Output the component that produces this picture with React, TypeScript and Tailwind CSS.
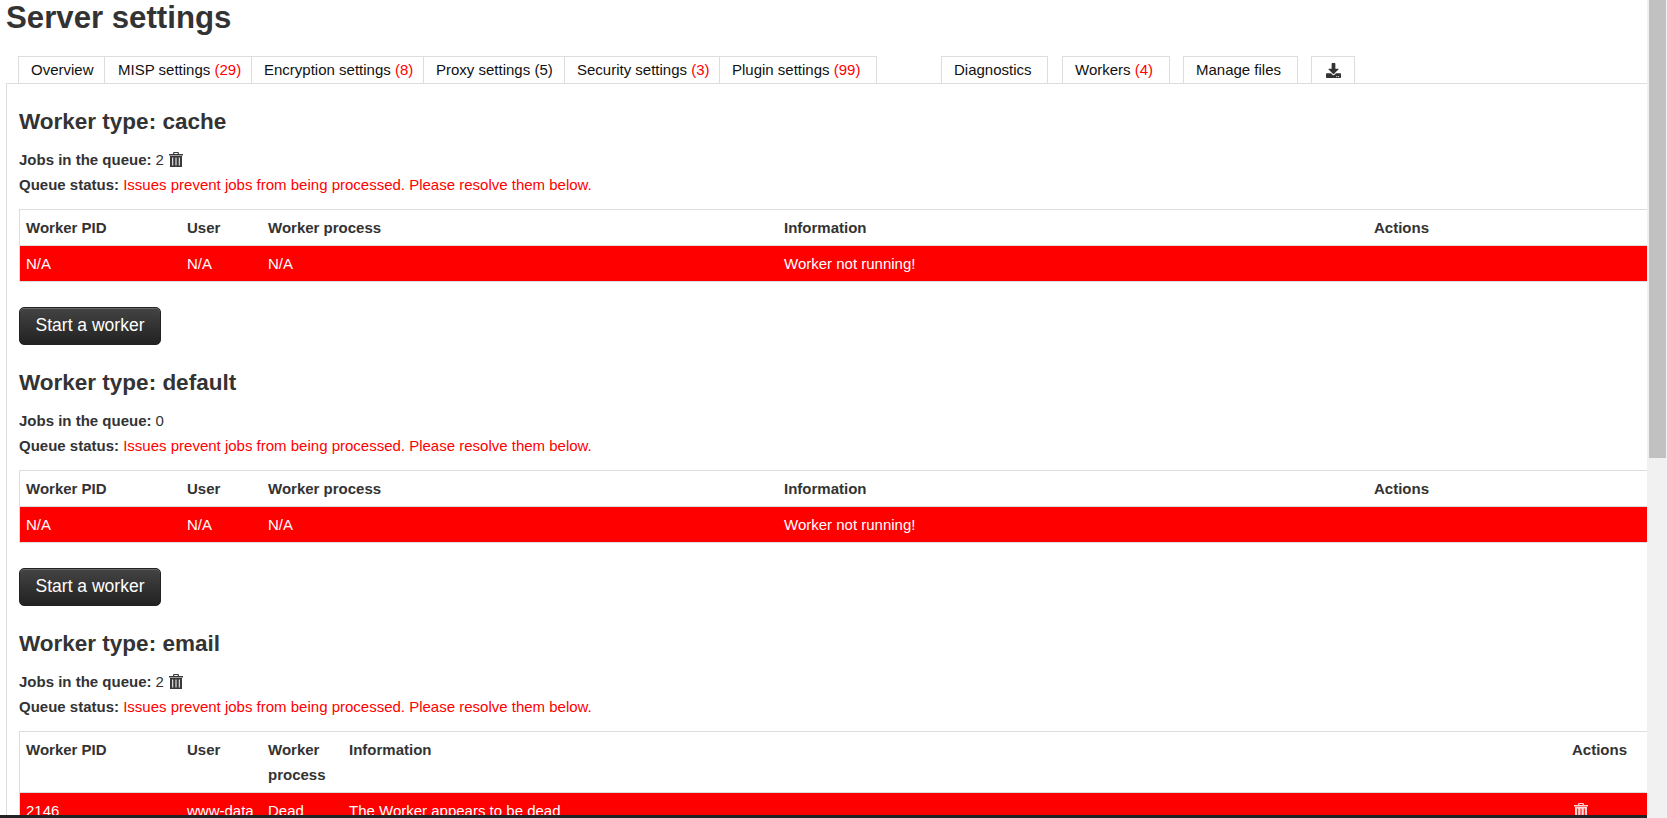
import { FaDownload } from "react-icons/fa"

interface TabItem {
  label: string
  count?: number
  countRed?: boolean
  className: string
}

const tabs: TabItem[] = [
  { label: "Overview", className: "w-[86px] ml-[18px] border-l" },
  { label: "MISP settings", count: 29, countRed: true, className: "w-[147px] border-l pl-[13px]" },
  { label: "Encryption settings", count: 8, countRed: true, className: "w-[172px] border-l" },
  { label: "Proxy settings", count: 5, className: "w-[141px] border-l" },
  { label: "Security settings", count: 3, countRed: true, className: "w-[155px] border-l" },
  { label: "Plugin settings", count: 99, countRed: true, className: "w-[158px] border-x" },
  { label: "Diagnostics", className: "w-[107px] ml-[64px] border-x" },
  { label: "Workers", count: 4, countRed: true, className: "w-[108px] ml-[14px] border-x" },
  { label: "Manage files", className: "w-[115px] ml-[13px] border-x" },
]

function TrashIcon({ className }: { className: string }) {
  return (
    <svg viewBox="0 0 14 15" className={className} fill="currentColor" fillRule="evenodd">
      <path d="M4.5 0h5l.6 2H14v1.4H0V2h3.9zM5.5 1l-.3 1h3.6L8.5 1z" />
      <path d="M1 4h12v11H1zM3.2 5.6v7.8h1v-7.8zM6.5 5.6v7.8h1v-7.8zM9.8 5.6v7.8h1v-7.8z" />
    </svg>
  )
}

const th = "px-[7px] py-[5px] text-left align-top font-bold border-b border-[#ddd]"
const td = "px-[7px] py-[5px] text-left align-top border-b border-[#ddd]"

function NotRunningTable() {
  return (
    <table className="mt-[12px] w-full table-fixed border-separate border-spacing-0 border-l border-t border-[#ddd]">
      <thead>
        <tr>
          <th className={`${th} w-[160px] !pl-[6px]`}>Worker PID</th>
          <th className={`${th} w-[81px]`}>User</th>
          <th className={`${th} w-[516px]`}>Worker process</th>
          <th className={`${th} w-[590px]`}>Information</th>
          <th className={th}>Actions</th>
        </tr>
      </thead>
      <tbody>
        <tr className="bg-[#ff0000] text-white">
          <td className={`${td} !pl-[6px]`}>N/A</td>
          <td className={td}>N/A</td>
          <td className={td}>N/A</td>
          <td className={td}>Worker not running!</td>
          <td className={td}></td>
        </tr>
      </tbody>
    </table>
  )
}

function WorkerSection({ type, jobs }: { type: string; jobs: number }) {
  return (
    <>
      <h3 className="h-[36px] text-[22.5px] font-bold leading-[36px]">Worker type: {type}</h3>
      <p className="mt-[7px] flex items-center">
        <b>Jobs in the queue:</b>
        <span className="ml-[4px]">{jobs}</span>
        {jobs > 0 && <TrashIcon className="ml-[5px] h-[15px] w-[14px] text-[#3a3a3a]" />}
      </p>
      <p>
        <b>Queue status:</b>{" "}
        <span className="text-[#ff0000]">Issues prevent jobs from being processed. Please resolve them below.</span>
      </p>
    </>
  )
}

function StartButton() {
  return (
    <button className="mb-[20px] mt-[25px] block h-[38px] w-[142px] rounded-[5px] border border-[#222] bg-gradient-to-b from-[#444] to-[#222] pb-[2px] text-[17.5px] text-white shadow-[inset_0_1px_0_rgba(255,255,255,0.2)]">
      Start a worker
    </button>
  )
}

export default function App() {
  return (
    <div className="flex h-screen w-full overflow-hidden bg-white font-['Liberation_Sans',Arial,sans-serif] text-[15px] leading-[25px] text-[#333]">
      <div className="flex min-w-0 flex-1 flex-col">
        <div className="min-h-0 flex-1 overflow-hidden">
          <h1 className="mb-[20px] h-[36px] pl-[6px] text-[31.2px] font-bold leading-[36px]">Server settings</h1>

          <div className="flex h-[27px]">
            {tabs.map((tab) => (
              <div
                key={tab.label}
                className={`border-t border-[#ddd] pl-[12px] text-left leading-[25px] text-[#111] ${tab.className}`}
              >
                {tab.label}
                {tab.count !== undefined && (
                  <span className={tab.countRed ? "text-[#ff0000]" : ""}> ({tab.count})</span>
                )}
              </div>
            ))}
            <div className="ml-[13px] flex w-[44px] items-center justify-center border-x border-t border-[#ddd] text-[#333]">
              <FaDownload className="h-[15px] w-[15px]" />
            </div>
          </div>

          <div className="ml-[6px] border-l border-t border-[#ddd] pl-[12px] pt-[20px]">
            <WorkerSection type="cache" jobs={2} />
            <NotRunningTable />
            <StartButton />

            <WorkerSection type="default" jobs={0} />
            <NotRunningTable />
            <StartButton />

            <WorkerSection type="email" jobs={2} />
            <table className="mt-[12px] w-full table-fixed border-separate border-spacing-0 border-l border-t border-[#ddd]">
              <thead>
                <tr>
                  <th className={`${th} w-[160px] !pl-[6px]`}>Worker PID</th>
                  <th className={`${th} w-[81px]`}>User</th>
                  <th className={`${th} w-[81px]`}>Worker process</th>
                  <th className={th}>Information</th>
                  <th className={`${th} w-[82px]`}>Actions</th>
                </tr>
              </thead>
              <tbody>
                <tr className="bg-[#ff0000] text-white">
                  <td className={`${td} !pl-[6px]`}>2146</td>
                  <td className={td}>www-data</td>
                  <td className={td}>Dead</td>
                  <td className={td}>The Worker appears to be dead</td>
                  <td className={td}>
                    <TrashIcon className="ml-[2px] mt-[5px] h-[15px] w-[14px] text-[#ffd6d6]" />
                  </td>
                </tr>
              </tbody>
            </table>
          </div>
        </div>
        <div className="h-[3px] shrink-0 bg-[#222]" />
      </div>

      <div className="w-[20px] shrink-0 bg-[#f1f1f1] pl-[2px] pr-[1px]">
        <div className="h-[458px] bg-[#c1c1c1]" />
      </div>
    </div>
  )
}
